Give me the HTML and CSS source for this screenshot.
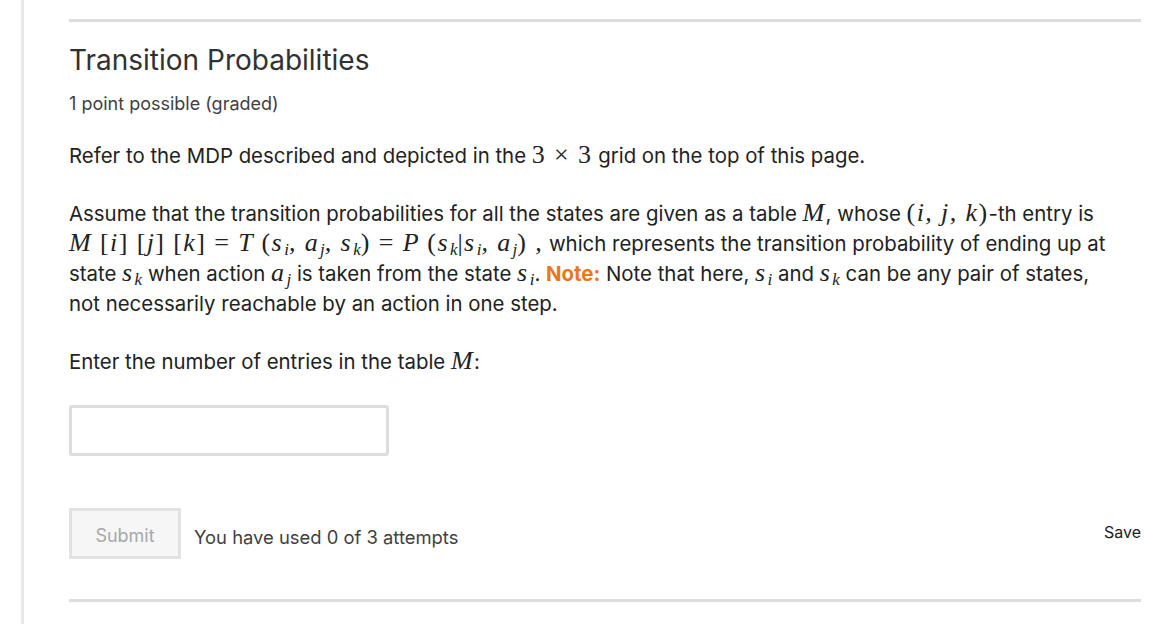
FILE: index.html
```html
<!DOCTYPE html>
<html>
<head>
<meta charset="utf-8">
<link rel="stylesheet" href="styles.css">
</head>
<body>
<div class="rail">
  <div class="problem">
    <h2 class="title">Transition Probabilities</h2>
    <div class="points">1 point possible (graded)</div>
    <p class="para">Refer to the MDP described and depicted in the <span class="m"><span class="r">3</span> <span class="r op">×</span> <span class="r">3</span></span> grid on the top of this page.</p>
    <p class="para">Assume that the transition probabilities for all the states are given as a table <span class="m">M</span>, whose <span class="m"><span class="r">(</span>i, j, k<span class="r">)</span></span>-th entry is <span class="m">M <span class="r">[</span>i<span class="r">]</span> <span class="r">[</span>j<span class="r">]</span> <span class="r">[</span>k<span class="r">]</span> <span class="r op">=</span> T <span class="r">(</span>s<sub>i</sub>, a<sub>j</sub>, s<sub>k</sub><span class="r">)</span> <span class="r op">=</span> P <span class="r">(</span>s<sub>k</sub><span class="r">|</span>s<sub>i</sub>, a<sub>j</sub><span class="r">)</span> ,</span> which represents the transition probability of ending up at state <span class="m">s<sub>k</sub></span> when action <span class="m">a<sub>j</sub></span> is taken from the state <span class="m">s<sub>i</sub></span>. <strong class="note">Note:</strong> Note that here, <span class="m">s<sub>i</sub></span> and <span class="m">s<sub>k</sub></span> can be any pair of states, not necessarily reachable by an action in one step.</p>
    <p class="para">Enter the number of entries in the table <span class="m">M</span>:</p>
    <input class="answer" type="text">
    <div class="actions">
      <button class="submit">Submit</button>
      <span class="attempts">You have used 0 of 3 attempts</span>
      <span class="save">Save</span>
    </div>
  </div>
</div>
</body>
</html>
```

FILE: styles.css
```css
html, body {
  margin: 0;
  padding: 0;
  background: #fff;
}
body {
  font-family: Inter, "Noto Sans", sans-serif;
  color: #313131;
  height: 624px;
  overflow: hidden;
}
.rail {
  margin-left: 21px;
  border-left: 3px solid #e8e8e8;
  height: 624px;
  box-sizing: border-box;
  padding-left: 45px;
  padding-top: 19px;
}
.problem {
  width: 1072px;
  border-top: 3px solid #dddddd;
  border-bottom: 3px solid #dddddd;
  height: 583px;
  box-sizing: border-box;
}
.title {
  font-size: 28px;
  font-weight: 400;
  margin: 21px 0 0 0;
  line-height: 34px;
  color: #313131;
}
.points {
  font-size: 18px;
  color: #414141;
  margin-top: 15px;
  line-height: 24px;
}
.para {
  font-size: 20.4px;
  line-height: 30px;
  margin: 25px 0 0 0;
  color: #222;
  max-width: 1050px;
}
.para + .para {
  margin-top: 28px;
}
.m {
  font-family: "Liberation Serif", "DejaVu Serif", serif;
  font-style: italic;
  font-size: 26px;
  line-height: 1;
  letter-spacing: 1.4px;
  white-space: nowrap;
}
.m .r {
  font-style: normal;
}
.m sub {
  font-size: 17px;
  vertical-align: -4px;
  line-height: 1;
  letter-spacing: 0;
  margin-left: 1px;
}
.note {
  color: #e87722;
  font-weight: 700;
}
.answer {
  display: block;
  margin-top: 28px;
  width: 320px;
  height: 51px;
  box-sizing: border-box;
  border: 3px solid #dddddd;
  border-radius: 3px;
  background: #fff;
  outline: none;
}
.actions {
  display: flex;
  align-items: center;
  margin-top: 52px;
}
.submit {
  width: 112px;
  height: 51px;
  box-sizing: border-box;
  border: 3px solid #e2e2e2;
  background: #f6f6f6;
  color: #a8a8a8;
  font-family: Inter, sans-serif;
  font-size: 18px;
  border-radius: 1px;
  padding: 0;
  padding-top: 3px;
}
.attempts {
  font-size: 18.4px;
  color: #414141;
  margin-left: 13px;
  margin-top: 7px;
}
.save {
  margin-left: auto;
  font-size: 16px;
  color: #222;
  margin-top: -3px;
}
```
